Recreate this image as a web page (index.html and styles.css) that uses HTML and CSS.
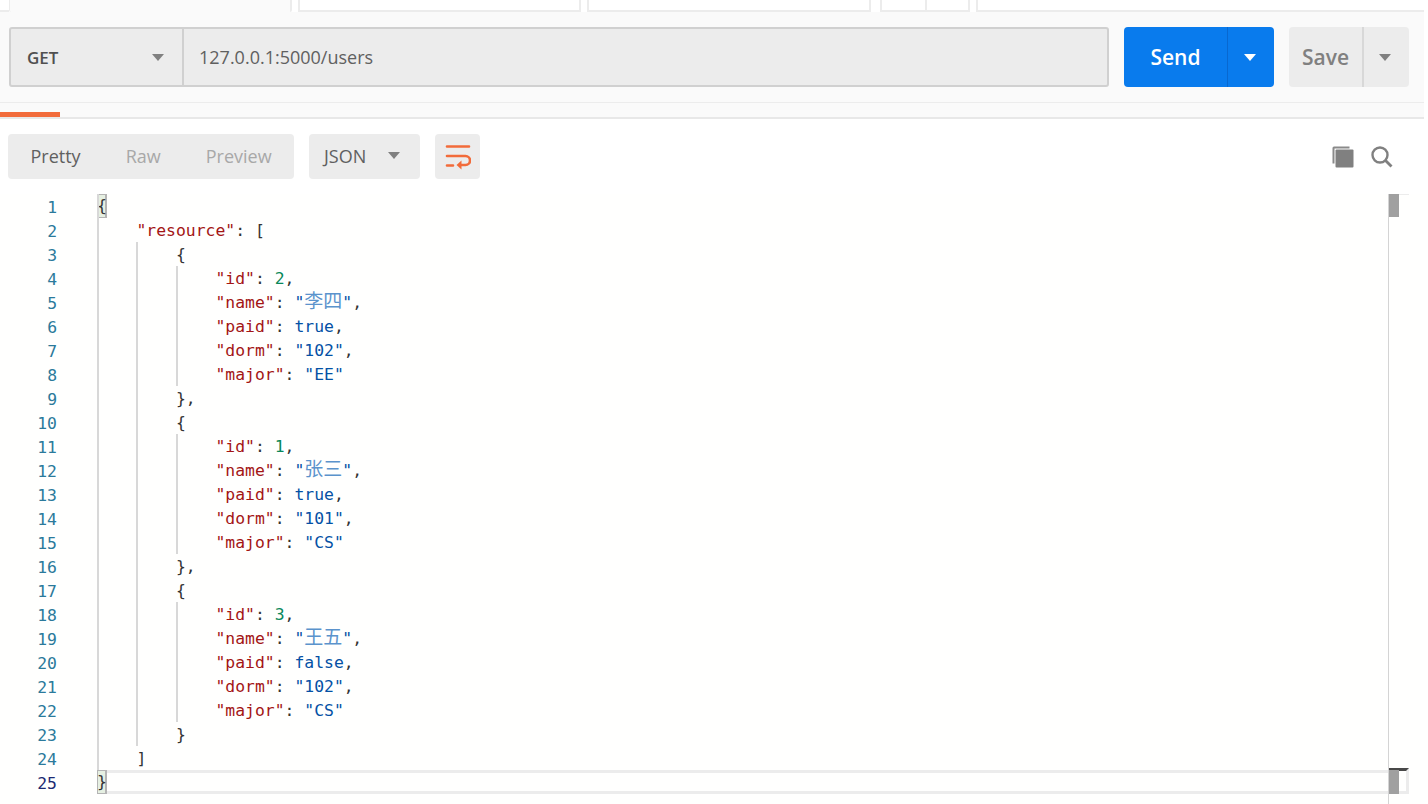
FILE: index.html
```html
<!DOCTYPE html>
<html lang="en">
<head>
<meta charset="utf-8">
<title>Postman response</title>
<link rel="stylesheet" href="styles.css">
</head>
<body>
<div class="tabs">
  <div class="tab-lead"></div>
  <div class="tab t-active"></div>
  <div class="tab t1"></div>
  <div class="tab t2"></div>
  <div class="tab t3"></div>
  <div class="tab t4"></div>
  <div class="tab t5"></div>
</div>
<div class="request">
  <div class="url-group">
    <div class="method"><span>GET</span><i class="caret"></i></div>
    <div class="url">127.0.0.1:5000/users</div>
  </div>
  <div class="send"><span class="send-label">Send</span><span class="send-drop"><i class="caret white"></i></span></div>
  <div class="save"><span class="save-label">Save</span><span class="save-drop"><i class="caret"></i></span></div>
</div>
<div class="resp-tabs"><div class="indicator"></div></div>
<div class="toolbar">
  <div class="modes"><span class="on">Pretty</span><span>Raw</span><span>Preview</span></div>
  <div class="format"><span>JSON</span><i class="caret"></i></div>
  <div class="wrap">
    <svg width="26" height="26" viewBox="0 0 26 26"><path d="M2 2.500h22M2 12h18.500a4.500 4.500 0 0 1 0 9H15M2 21.500h6" fill="none" stroke="#f26b3a" stroke-width="2.600" stroke-linecap="round"/><path d="M16.500 16.500L11.500 21l5 4.500z" fill="#f26b3a"/></svg>
  </div>
  <div class="spacer"></div>
  <svg class="copy" width="24" height="24" viewBox="0 0 24 24"><path d="M1.500 18.500V3A1.500 1.500 0 0 1 3 1.500h15.500v2H3.500v15z" fill="#8a8a8a"/><rect x="4.500" y="4.500" width="18" height="18" rx="1" fill="#808080"/></svg>
  <svg class="search" width="24" height="24" viewBox="0 0 24 24"><circle cx="10" cy="10" r="7.500" fill="none" stroke="#808080" stroke-width="2.400"/><path d="M15.500 15.500l6 6" stroke="#808080" stroke-width="2.800" fill="none"/></svg>
</div>
<div class="editor">
  <div class="gutter">
    <div>1</div><div>2</div><div>3</div><div>4</div><div>5</div>
    <div>6</div><div>7</div><div>8</div><div>9</div><div>10</div>
    <div>11</div><div>12</div><div>13</div><div>14</div><div>15</div>
    <div>16</div><div>17</div><div>18</div><div>19</div><div>20</div>
    <div>21</div><div>22</div><div>23</div><div>24</div><div class="cur">25</div>
  </div>
  <div class="code">
    <i class="guide g0"></i><i class="guide g1"></i><i class="guide g2 a"></i><i class="guide g2 b"></i><i class="guide g2 c"></i>
    <div class="line"><b class="match">{</b></div>
    <div class="line i1"><span class="k">"resource"</span>: [</div>
    <div class="line i2">{</div>
    <div class="line i3"><span class="k">"id"</span>: <span class="n">2</span>,</div>
    <div class="line i3"><span class="k">"name"</span>: <span class="s">"<span class="cjk">李四</span>"</span>,</div>
    <div class="line i3"><span class="k">"paid"</span>: <span class="s">true</span>,</div>
    <div class="line i3"><span class="k">"dorm"</span>: <span class="s">"102"</span>,</div>
    <div class="line i3"><span class="k">"major"</span>: <span class="s">"EE"</span></div>
    <div class="line i2">},</div>
    <div class="line i2">{</div>
    <div class="line i3"><span class="k">"id"</span>: <span class="n">1</span>,</div>
    <div class="line i3"><span class="k">"name"</span>: <span class="s">"<span class="cjk">张三</span>"</span>,</div>
    <div class="line i3"><span class="k">"paid"</span>: <span class="s">true</span>,</div>
    <div class="line i3"><span class="k">"dorm"</span>: <span class="s">"101"</span>,</div>
    <div class="line i3"><span class="k">"major"</span>: <span class="s">"CS"</span></div>
    <div class="line i2">},</div>
    <div class="line i2">{</div>
    <div class="line i3"><span class="k">"id"</span>: <span class="n">3</span>,</div>
    <div class="line i3"><span class="k">"name"</span>: <span class="s">"<span class="cjk">王五</span>"</span>,</div>
    <div class="line i3"><span class="k">"paid"</span>: <span class="s">false</span>,</div>
    <div class="line i3"><span class="k">"dorm"</span>: <span class="s">"102"</span>,</div>
    <div class="line i3"><span class="k">"major"</span>: <span class="s">"CS"</span></div>
    <div class="line i2">}</div>
    <div class="line i1">]</div>
    <div class="line active"><b class="match">}</b></div>
  </div>
  <div class="scroll">
    <i class="thumb top"></i>
    <i class="mark"></i>
    <i class="thumb bottom"></i>
  </div>
</div>
</body>
</html>
```
FILE: styles.css
```css
* { box-sizing: border-box; }
html, body { margin: 0; padding: 0; height: 804px; overflow: hidden; background: #fff; }
body { font-family: "Open Sans", "Noto Sans", sans-serif; color: #505050; }

.tabs { display: flex; height: 12px; width: 1424px; background: #fff; }
.tab-lead { width: 9px; height: 12px; border-bottom: 2px solid #ececec; }
.tab { height: 12px; border-left: 2px solid #ececec; border-right: 2px solid #ececec; border-bottom: 2px solid #ececec; }
.t-active { width: 283px; background: #fafafa; border-left-width: 1px; border-bottom: 0; border-bottom-right-radius: 2px; border-bottom-left-radius: 2px; }
.t1 { width: 283px; margin-left: 6px; }
.t2 { width: 284px; margin-left: 6px; }
.t3 { width: 45px; margin-left: 9px; border-right: 0; }
.t4 { width: 45px; }
.t5 { flex: 1; margin-left: 6px; border-right: 0; }

.request { display: flex; align-items: flex-start; height: 91px; width: 1424px; padding: 15px 15px 0 9px; background: #fafafa; border-bottom: 1px solid #ececec; }
.url-group { display: flex; width: 1100px; height: 60px; background: #ececec; border: 2px solid #d0d0d0; border-radius: 3px; }
.method { display: flex; align-items: center; justify-content: space-between; width: 173px; padding: 0 18px 0 16px; border-right: 2px solid #d0d0d0; font-size: 17px; font-weight: 600; color: #505050; }
.url { display: flex; align-items: center; padding-left: 15px; font-size: 18px; color: #606060; }

.caret { display: block; width: 0; height: 0; border-left: 6px solid transparent; border-right: 6px solid transparent; border-top: 7px solid #808080; }
.caret.white { border-top-color: #fff; }

.send { display: flex; height: 60px; width: 150px; margin-left: 15px; background: #097bed; border-radius: 4px; color: #fff; font-weight: 600; font-size: 21px; }
.send-label { display: flex; align-items: center; justify-content: center; width: 104px; border-right: 1px solid #0868d0; }
.send-drop { flex: 1; display: flex; align-items: center; justify-content: center; padding-right: 2px; }
.save { display: flex; height: 60px; width: 120px; margin-left: 15px; background: #ececec; border-radius: 4px; color: #808080; font-weight: 600; font-size: 21px; }
.save-label { display: flex; align-items: center; justify-content: center; width: 75px; border-right: 2px solid #d8d8d8; }
.save-drop { flex: 1; display: flex; align-items: center; justify-content: center; padding-right: 4px; }

.resp-tabs { height: 16px; width: 1424px; padding-top: 9px; background: #fafafa; border-bottom: 2px solid #e8e8e8; }
.indicator { width: 60px; height: 5px; background: #f26b3a; }

.toolbar { display: flex; align-items: center; height: 45px; margin-top: 15px; padding: 0 34px 0 8px; width: 1428px; }
.modes { display: flex; align-items: center; width: 286px; height: 45px; padding: 0 0 2px 22.500px; background: #ececec; border-radius: 4px; font-size: 18px; color: #a8a8a8; }
.modes span { margin-right: 32px; }
.modes .on { color: #606060; margin-right: 45px; }
.modes span:nth-child(2) { margin-right: 45px; }
.format { display: flex; align-items: center; justify-content: space-between; width: 111px; height: 45px; margin-left: 15px; padding: 0 20px 2px 15px; background: #ececec; border-radius: 4px; font-size: 18px; color: #606060; }
.wrap { display: flex; align-items: center; justify-content: center; width: 45px; height: 45px; margin-left: 15px; background: #ececec; border-radius: 4px; }
.spacer { flex: 1; }
.search { margin-left: 15px; }

.editor { display: flex; height: 610px; margin-top: 15px; background: #fffffe; }
.gutter { width: 97px; }
.gutter div { height: 24px; line-height: 27px; font-size: 16.400px; color: #2b7a9b; text-align: right; padding-right: 40px; font-family: "DejaVu Sans Mono", monospace; }
.gutter div.cur { color: #1c2a72; }
.code { position: relative; width: 1292px; font-family: "DejaVu Sans Mono", "Noto Sans CJK SC", monospace; font-size: 16.400px; color: #333; border-right: 1px solid #d4d4d4; height: 610px; }
.line { height: 24px; line-height: 26px; white-space: pre; }
.i1 { padding-left: 39.500px; }
.i2 { padding-left: 79px; }
.i3 { padding-left: 118.500px; }
.k { color: #a31515; }
.s { color: #0451a5; }
.n { color: #09885a; }
.cjk { font-family: "Noto Sans CJK SC", sans-serif; color: #5b93cc; font-size: 19px; line-height: 20px; }
.match { display: inline-block; vertical-align: top; width: 10px; height: 24px; font-weight: 400; background: #e6f0e2; border: 1px solid #b4b4b4; border-right-width: 2px; line-height: 22px; text-indent: -1px; }
.line.active { box-shadow: inset 0 3px 0 #ececec, inset 0 -3px 0 #ececec; }
.guide { position: absolute; display: block; width: 2px; background: #d8d8d8; }
.g0 { left: 0; top: 0; height: 576px; }
.g1 { left: 39px; top: 48px; height: 504px; }
.g2 { left: 79px; }
.g2.a { top: 72px; height: 120px; }
.g2.b { top: 240px; height: 120px; }
.g2.c { top: 408px; height: 120px; }
.scroll { position: relative; width: 20px; height: 610px; border-top: 1px solid #ececec; }
.thumb { position: absolute; left: 0; width: 10px; background: #a0a0a0; display: block; }
.thumb.top { top: -1px; height: 23px; }
.thumb.bottom { top: 575px; height: 24px; }
.mark { position: absolute; display: block; left: 0; top: 573px; width: 20px; height: 26px; border: 3px solid #ececec; border-top: 3px solid #484848; border-left: 0; }
```
